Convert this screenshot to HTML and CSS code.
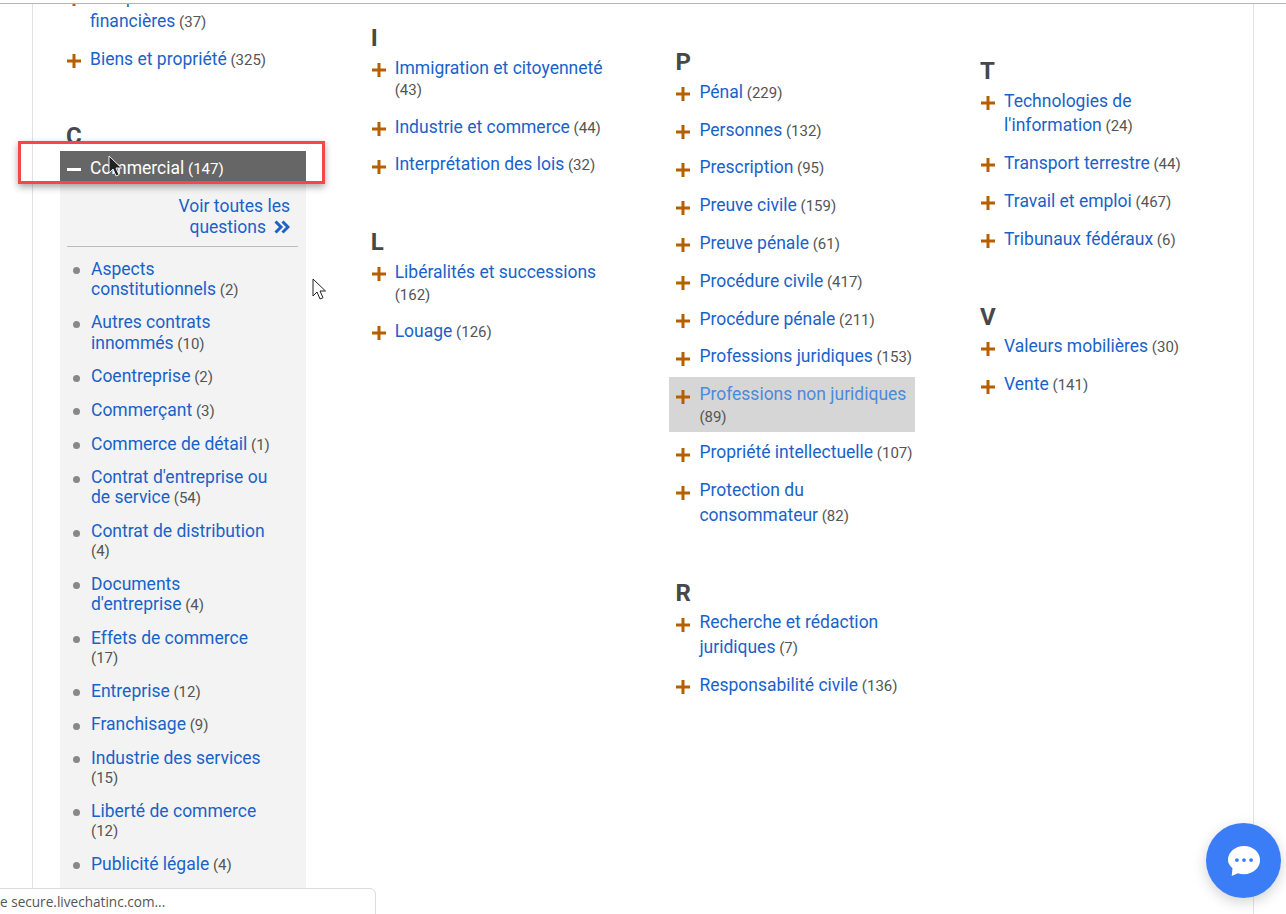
FILE: index.html
```html
<!DOCTYPE html>
<html lang="fr">
<head>
<meta charset="utf-8">
<title>Questions</title>
<link rel="stylesheet" href="styles.css">
</head>
<body>
<svg class="defs" width="0" height="0" aria-hidden="true"><defs>
<symbol id="plus" viewBox="0 0 14 14"><path d="M5.500 0h3v5.500H14v3H8.500V14h-3V8.500H0v-3h5.500z"/></symbol>
</defs></svg>
<div class="topline"></div>
<main class="page">
<section class="col col-a">
<ul class="topics clipped">
<li><svg class="plus"><use href="#plus"/></svg><a>Banques et institutions financières</a> <span class="n">(37)</span></li>
<li><svg class="plus"><use href="#plus"/></svg><a>Biens et propriété</a> <span class="n">(325)</span></li>
</ul>
<h2 class="letter gap-c">C</h2>
<div class="open-row"><span class="minus"></span><a>Commercial</a> <span class="n">(147)</span></div>
<div class="panel">
<a class="all">Voir toutes les<br>questions<svg class="chev" viewBox="0 0 16 14"><path d="M1.500 1.500 7 7l-5.500 5.500M8.500 1.500 14 7l-5.500 5.500"/></svg></a>
<hr class="rule">
<ul class="subs">
<li><a>Aspects constitutionnels</a> <span class="n">(2)</span></li>
<li><a>Autres contrats innommés</a> <span class="n">(10)</span></li>
<li><a>Coentreprise</a> <span class="n">(2)</span></li>
<li><a>Commerçant</a> <span class="n">(3)</span></li>
<li><a>Commerce de détail</a> <span class="n">(1)</span></li>
<li><a>Contrat d'entreprise ou de service</a> <span class="n">(54)</span></li>
<li><a>Contrat de distribution</a> <span class="n">(4)</span></li>
<li><a>Documents d'entreprise</a> <span class="n">(4)</span></li>
<li><a>Effets de commerce</a> <span class="n">(17)</span></li>
<li><a>Entreprise</a> <span class="n">(12)</span></li>
<li><a>Franchisage</a> <span class="n">(9)</span></li>
<li><a>Industrie des services</a> <span class="n">(15)</span></li>
<li><a>Liberté de commerce</a> <span class="n">(12)</span></li>
<li><a>Publicité légale</a> <span class="n">(4)</span></li>
</ul>
</div>
</section>
<section class="col col-b">
<h2 class="letter">I</h2>
<ul class="topics">
<li><svg class="plus"><use href="#plus"/></svg><a>Immigration et citoyenneté</a> <span class="n">(43)</span></li>
<li><svg class="plus"><use href="#plus"/></svg><a>Industrie et commerce</a> <span class="n">(44)</span></li>
<li><svg class="plus"><use href="#plus"/></svg><a>Interprétation des lois</a> <span class="n">(32)</span></li>
</ul>
<h2 class="letter gap">L</h2>
<ul class="topics">
<li><svg class="plus"><use href="#plus"/></svg><a>Libéralités et successions</a> <span class="n">(162)</span></li>
<li><svg class="plus"><use href="#plus"/></svg><a>Louage</a> <span class="n">(126)</span></li>
</ul>
</section>
<section class="col col-c">
<h2 class="letter">P</h2>
<ul class="topics">
<li><svg class="plus"><use href="#plus"/></svg><a>Pénal</a> <span class="n">(229)</span></li>
<li><svg class="plus"><use href="#plus"/></svg><a>Personnes</a> <span class="n">(132)</span></li>
<li><svg class="plus"><use href="#plus"/></svg><a>Prescription</a> <span class="n">(95)</span></li>
<li><svg class="plus"><use href="#plus"/></svg><a>Preuve civile</a> <span class="n">(159)</span></li>
<li><svg class="plus"><use href="#plus"/></svg><a>Preuve pénale</a> <span class="n">(61)</span></li>
<li><svg class="plus"><use href="#plus"/></svg><a>Procédure civile</a> <span class="n">(417)</span></li>
<li><svg class="plus"><use href="#plus"/></svg><a>Procédure pénale</a> <span class="n">(211)</span></li>
<li><svg class="plus"><use href="#plus"/></svg><a>Professions juridiques</a> <span class="n">(153)</span></li>
<li class="hover"><svg class="plus"><use href="#plus"/></svg><a>Professions non juridiques</a> <span class="n">(89)</span></li>
<li><svg class="plus"><use href="#plus"/></svg><a>Propriété intellectuelle</a> <span class="n">(107)</span></li>
<li><svg class="plus"><use href="#plus"/></svg><a>Protection du consommateur</a> <span class="n">(82)</span></li>
</ul>
<h2 class="letter gap">R</h2>
<ul class="topics">
<li><svg class="plus"><use href="#plus"/></svg><a>Recherche et rédaction juridiques</a> <span class="n">(7)</span></li>
<li><svg class="plus"><use href="#plus"/></svg><a>Responsabilité civile</a> <span class="n">(136)</span></li>
</ul>
</section>
<section class="col col-d">
<h2 class="letter">T</h2>
<ul class="topics">
<li><svg class="plus"><use href="#plus"/></svg><a>Technologies de l'information</a> <span class="n">(24)</span></li>
<li><svg class="plus"><use href="#plus"/></svg><a>Transport terrestre</a> <span class="n">(44)</span></li>
<li><svg class="plus"><use href="#plus"/></svg><a>Travail et emploi</a> <span class="n">(467)</span></li>
<li><svg class="plus"><use href="#plus"/></svg><a>Tribunaux fédéraux</a> <span class="n">(6)</span></li>
</ul>
<h2 class="letter gap">V</h2>
<ul class="topics">
<li><svg class="plus"><use href="#plus"/></svg><a>Valeurs mobilières</a> <span class="n">(30)</span></li>
<li><svg class="plus"><use href="#plus"/></svg><a>Vente</a> <span class="n">(141)</span></li>
</ul>
</section>
</main>
<div class="callout"></div>
<svg class="cursor cursor-dark" viewBox="0 0 14 22"><path d="M1 1v17l4-4 3 7 3-1.300-3-6.700h5.500z"/></svg>
<svg class="cursor cursor-light" viewBox="0 0 14 22"><path d="M1 1v17l4-4 3 7 3-1.300-3-6.700h5.500z"/></svg>
<div class="status">e secure.livechatinc.com...</div>
<div class="chat"><svg viewBox="0 0 36 36"><path d="M18 2c9.400 0 17 6.600 17 15s-7.600 15-17 15c-2.300 0-4.500-.4-6.500-1.100L5 34l.8-8.200C2.800 23 1 20.200 1 17 1 8.600 8.600 2 18 2z" fill="#fff"/><circle cx="10.500" cy="17" r="2" fill="#3b7df6"/><circle cx="18" cy="17" r="2" fill="#3b7df6"/><circle cx="25.500" cy="17" r="2" fill="#3b7df6"/></svg></div>
</body>
</html>
```
FILE: styles.css
```css
* { box-sizing: border-box; }
html, body { margin: 0; height: 914px; overflow: hidden; background: #fff; }
body { font-family: Roboto, "Liberation Sans", sans-serif; position: relative; }
.defs { position: absolute; }
.topline { height: 4px; border-bottom: 1px solid #b5b5b5; background: #fff; position: relative; z-index: 2; }
.page {
  margin: -4px 0 0 32px; width: 1222px; height: 918px; overflow: hidden;
  border-left: 1px solid #e2e2e2; border-right: 1px solid #e2e2e2;
  display: grid; grid-template-columns: repeat(4, 246px); column-gap: 58.700px;
  padding-left: 27px; align-items: start;
}
.col-a { margin-top: -22px; }
.col-b { padding-top: 26px; }
.col-c { padding-top: 50px; }
.col-d { padding-top: 59px; }
ul { list-style: none; margin: 0; padding: 0; }
a { color: #1a62c9; }
.n { color: #555; font-size: 15px; }
.letter { margin: 0 0 0 6px; font-size: 24px; line-height: 24px; font-weight: 700; color: #484848; }
.letter.gap { margin-top: 46.700px; }
.letter.gap-c { margin-top: 46px; }
.topics { margin-top: -0.800px; font-size: 15px; line-height: 1.4; }
.topics.clipped { margin-top: 0; }
.topics li { position: relative; padding: 6.650px 0 6.650px 30px; }
.topics a { font-size: 17.500px; }
.plus { position: absolute; left: 7px; top: 14px; width: 14px; height: 14px; fill: #b55f00; }
.topics .hover { background: #d6d6d6; margin: 1.200px 0 2.200px; padding-top: 5.500px; padding-bottom: 4px; }
.hover .plus { top: 13px; }
.hover a { color: #4a8bdc; }
.open-row { height: 32px; margin-top: 3px; background: #666; color: #fff; font-size: 15px; line-height: 34px; padding-left: 30px; position: relative; }
.open-row a { color: #fff; font-size: 17.500px; }
.open-row .n { color: #fff; }
.minus { position: absolute; left: 7px; top: 17px; width: 14px; height: 3px; background: #fff; }
.panel { background: #f3f3f3; padding: 13px 8px 0 7px; height: 800px; }
.all { display: block; text-align: right; font-size: 17.500px; line-height: 21px; padding-right: 8px; }
.chev { width: 16px; height: 14px; margin-left: 8px; vertical-align: -1px; fill: none; stroke: #1a62c9; stroke-width: 3; }
.rule { border: 0; border-top: 1px solid #bbb; margin: 8px 0 12.500px; }
.subs { font-size: 15px; line-height: 19.200px; padding-left: 24px; }
.subs li { position: relative; margin-bottom: 13.450px; padding-right: 24px; }
.subs li::before { content: ""; position: absolute; left: -18.500px; top: 7.500px; width: 7px; height: 7px; border-radius: 50%; background: #888; }
.subs a { font-size: 17.500px; }
.callout { position: absolute; left: 18px; top: 141px; width: 307px; height: 43px; border: 3px solid #f4474a; box-shadow: 0 3px 7px rgba(0,0,0,.35); }
.cursor { position: absolute; width: 14px; height: 22px; }
.cursor-dark { left: 108px; top: 155px; fill: #222; stroke: #eee; stroke-width: 1; }
.cursor-light { left: 312px; top: 278px; fill: #fff; stroke: #222; stroke-width: 1; }
.status { position: absolute; left: -1px; top: 888px; width: 377px; height: 30px; background: #fff; border: 1px solid #dcdcdc; border-radius: 0 6px 0 0; font: 13.600px/26px "Open Sans", sans-serif; color: #555; }
.chat { position: absolute; left: 1206px; top: 823px; width: 75px; height: 75px; border-radius: 50%; background: #3b7df6; box-shadow: 0 4px 14px rgba(0,0,0,.18); display: flex; align-items: center; justify-content: center; }
.chat svg { width: 34px; height: 34px; }
```
